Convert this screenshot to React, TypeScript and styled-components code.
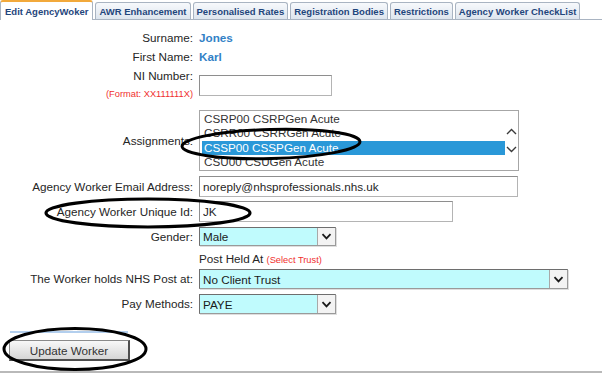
import React from 'react';
import styled, { createGlobalStyle } from 'styled-components';

const Global = createGlobalStyle`
  html, body { margin: 0; padding: 0; background: #fff; }
  body { font-family: "Liberation Sans", Arial, sans-serif; font-size: 11.7px; color: #262626; }
`;

const Page = styled.div`
  position: relative;
  width: 602px;
  height: 376px;
  overflow: hidden;
  background: #fff;
`;

const TabBar = styled.div`
  display: flex;
  align-items: flex-end;
  gap: 2px;
  height: 19px;
  border-bottom: 1px solid #a9b4c2;
`;

const Tab = styled.div<{ $active?: boolean }>`
  box-sizing: border-box;
  height: ${(p) => (p.$active ? 20 : 17)}px;
  margin-bottom: ${(p) => (p.$active ? -1 : 0)}px;
  padding: 0 ${(p) => (p.$active ? 4 : 3)}px;
  display: flex;
  align-items: center;
  font: bold 9.5px "Liberation Sans", Arial, sans-serif;
  color: #1f467c;
  white-space: nowrap;
  border: 1px solid #a9b4c2;
  border-bottom: none;
  border-top: ${(p) => (p.$active ? '2px solid #f2a93b' : '1px solid #a9b4c2')};
  border-radius: 3px 3px 0 0;
  background: ${(p) => (p.$active ? '#ffffff' : 'linear-gradient(#f7f9fc, #dde5ee)')};
`;

const Form = styled.div`
  padding-top: 9px;
`;

const Row = styled.div<{ $mt?: number; $top?: boolean }>`
  display: grid;
  grid-template-columns: 193px 1fr;
  column-gap: 6px;
  align-items: ${(p) => (p.$top ? 'start' : 'center')};
  margin-top: ${(p) => p.$mt ?? 0}px;
`;

const Label = styled.div`
  text-align: right;
  white-space: nowrap;
  line-height: 16px;
  color: #262626;
`;

const Hint = styled.div`
  margin-top: 4px;
  line-height: 12px;
  font-size: 9.3px;
  color: #f0302e;
  text-align: right;
  white-space: nowrap;
`;

const Value = styled.div`
  font-weight: bold;
  color: #3281c6;
  line-height: 18px;
`;

const TextInput = styled.input<{ $w: number; $mt?: number }>`
  box-sizing: border-box;
  width: ${(p) => p.$w}px;
  height: 21px;
  margin: ${(p) => p.$mt ?? 0}px 0 0 0;
  padding: 0 3px;
  font: 11.7px "Liberation Sans", Arial, sans-serif;
  color: #262626;
  background: #fff;
  border: 1px solid #8e8e8e;
  border-right-color: #b4b4b4;
  border-bottom-color: #b4b4b4;
  outline: none;
`;

const ListBox = styled.div`
  box-sizing: border-box;
  width: 320px;
  height: 61px;
  border: 1px solid #a6a6a6;
  display: flex;
  overflow: hidden;
  background: #fff;
`;

const ListItems = styled.div`
  flex: 1;
  padding: 1px 0 0 2px;
`;

const ListItem = styled.div<{ $selected?: boolean }>`
  height: 14.3px;
  line-height: 14.3px;
  padding-left: 2px;
  white-space: nowrap;
  color: ${(p) => (p.$selected ? '#ffffff' : '#333')};
  background: ${(p) => (p.$selected ? '#2a98d8' : 'transparent')};
`;

const ScrollTrack = styled.div`
  width: 13px;
  display: flex;
  flex-direction: column;
  align-items: center;
  justify-content: center;
  gap: 11px;
`;

const Select = styled.div<{ $w: number; $h?: number }>`
  box-sizing: border-box;
  width: ${(p) => p.$w}px;
  height: ${(p) => p.$h ?? 19}px;
  display: flex;
  align-items: stretch;
  border: 1px solid #6e6e6e;
  border-right-color: #9a9a9a;
  border-bottom-color: #9a9a9a;
  background: #c0fbfd;
  box-shadow: 1px 1px 0 #dedede;
`;

const SelectValue = styled.span`
  flex: 1;
  padding-left: 3px;
  display: flex;
  align-items: center;
  color: #1a1a1a;
  white-space: nowrap;
`;

const SelectArrow = styled.span`
  width: 17px;
  display: flex;
  align-items: center;
  justify-content: center;
  background: #f3f3f3;
  border-left: 1px solid #a8a8a8;
`;

const Note = styled.div`
  line-height: 14px;
  color: #262626;
  white-space: nowrap;
`;

const NoteRed = styled.span`
  font-size: 9.3px;
  color: #f0302e;
`;

const Divider = styled.div`
  margin: 17px 0 0 10px;
  width: 118px;
  height: 2px;
  background: #b3cfee;
`;

const Button = styled.button`
  display: block;
  box-sizing: border-box;
  margin: 7px 0 0 9px;
  width: 121px;
  height: 21px;
  padding: 0;
  font: 11.7px "Liberation Sans", Arial, sans-serif;
  color: #333;
  background: linear-gradient(#f8f8f8, #d6d6d6);
  border: 1px solid #8a8a8a;
  border-right: 2px solid #4e4e4e;
  border-bottom: 2px solid #4e4e4e;
`;

const BottomRule = styled.div`
  margin-top: 10px;
  height: 2px;
  background: #b9b9b9;
`;

const Annotations = styled.svg`
  position: absolute;
  left: 0;
  top: 0;
  pointer-events: none;
`;

const Chevron = ({ up }: { up?: boolean }) => (
  <svg width="11" height="7" viewBox="0 0 11 7">
    <path
      d={up ? 'M1 6 L5.5 1.5 L10 6' : 'M1 1 L5.5 5.5 L10 1'}
      fill="none"
      stroke="#3a3a3a"
      strokeWidth="1.4"
    />
  </svg>
);

const DropChevron = () => (
  <svg width="11" height="7" viewBox="0 0 11 7">
    <path d="M1.5 1.2 L5.5 5.4 L9.5 1.2" fill="none" stroke="#1a1a1a" strokeWidth="1.8" />
  </svg>
);

const tabs = [
  'Edit AgencyWoker',
  'AWR Enhancement',
  'Personalised Rates',
  'Registration Bodies',
  'Restrictions',
  'Agency Worker CheckList',
];

const assignments = [
  'CSRP00 CSRPGen Acute',
  'CSRR00 CSRRGen Acute',
  'CSSP00 CSSPGen Acute',
  'CSU00 CSUGen Acute',
];

export default function App() {
  return (
    <Page>
      <Global />
      <TabBar>
        {tabs.map((t, i) => (
          <Tab key={t} $active={i === 0}>
            {t}
          </Tab>
        ))}
      </TabBar>
      <Form>
        <Row>
          <Label>Surname:</Label>
          <Value>Jones</Value>
        </Row>
        <Row $mt={1}>
          <Label>First Name:</Label>
          <Value>Karl</Value>
        </Row>
        <Row $mt={2} $top>
          <div>
            <Label>NI Number:</Label>
            <Hint>(Format: XX111111X)</Hint>
          </div>
          <TextInput $w={133} $mt={7} readOnly defaultValue="" />
        </Row>
        <Row $mt={10}>
          <Label>Assignments:</Label>
          <ListBox>
            <ListItems>
              {assignments.map((a, i) => (
                <ListItem key={a} $selected={i === 2}>
                  {a}
                </ListItem>
              ))}
            </ListItems>
            <ScrollTrack>
              <Chevron up />
              <Chevron />
            </ScrollTrack>
          </ListBox>
        </Row>
        <Row $mt={5}>
          <Label>Agency Worker Email Address:</Label>
          <TextInput $w={319} readOnly defaultValue="noreply@nhsprofessionals.nhs.uk" />
        </Row>
        <Row $mt={4}>
          <Label>Agency Worker Unique Id:</Label>
          <TextInput $w={254} readOnly defaultValue="JK" />
        </Row>
        <Row $mt={5}>
          <Label>Gender:</Label>
          <Select $w={137}>
            <SelectValue>Male</SelectValue>
            <SelectArrow>
              <DropChevron />
            </SelectArrow>
          </Select>
        </Row>
        <Row $mt={6}>
          <Label />
          <Note>
            Post Held At <NoteRed>(Select Trust)</NoteRed>
          </Note>
        </Row>
        <Row $mt={2}>
          <Label>The Worker holds NHS Post at:</Label>
          <Select $w={369} $h={20}>
            <SelectValue>No Client Trust</SelectValue>
            <SelectArrow>
              <DropChevron />
            </SelectArrow>
          </Select>
        </Row>
        <Row $mt={5}>
          <Label>Pay Methods:</Label>
          <Select $w={137} $h={20}>
            <SelectValue>PAYE</SelectValue>
            <SelectArrow>
              <DropChevron />
            </SelectArrow>
          </Select>
        </Row>
        <Divider />
        <Button>Update Worker</Button>
        <BottomRule />
      </Form>
      <Annotations width="602" height="376" viewBox="0 0 602 376">
        <ellipse cx="271" cy="144" rx="89" ry="14.5" fill="none" stroke="#000" strokeWidth="3" transform="rotate(-1.5 271 144)" />
        <ellipse cx="148" cy="213" rx="102" ry="14" fill="none" stroke="#000" strokeWidth="3.2" />
        <ellipse cx="75" cy="349" rx="71" ry="20.5" fill="none" stroke="#000" strokeWidth="3" />
      </Annotations>
    </Page>
  );
}
